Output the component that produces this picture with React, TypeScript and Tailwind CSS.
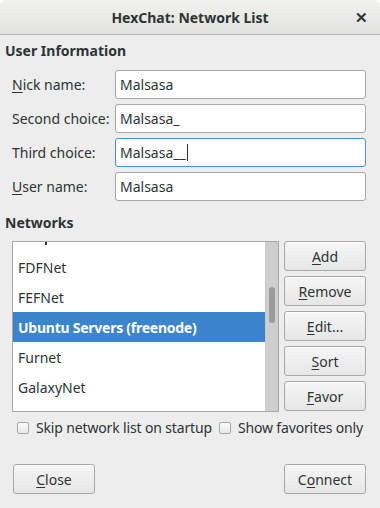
import React from 'react';

const U = ({ children }: { children: React.ReactNode }) => <span className="underline underline-offset-2 decoration-1">{children}</span>;

const fields = [
  { label: <><U>N</U>ick name:</>, value: 'Malsasa' },
  { label: <>Second choice:</>, value: 'Malsasa_' },
  { label: <>Third choice:</>, value: 'Malsasa__', focused: true },
  { label: <><U>U</U>ser name:</>, value: 'Malsasa' },
];

const networks = ['FDFNet', 'FEFNet', 'Ubuntu Servers (freenode)', 'Furnet', 'GalaxyNet'];

const Button = ({ children, className = '' }: { children: React.ReactNode; className?: string }) => (
  <button className={`h-[30px] w-[82px] rounded-[3px] border border-[#a8a8a8] bg-gradient-to-b from-[#f6f6f6] to-[#e6e6e6] text-[14px] text-[#2e3436] shadow-[inset_0_1px_0_#fff] ${className}`}>
    {children}
  </button>
);

const Check = ({ label }: { label: string }) => (
  <label className="flex items-center gap-[7px]">
    <span className="h-[12px] w-[12px] rounded-[2px] border border-[#a8a8a8] bg-gradient-to-b from-[#fbfbfb] to-[#e8e8e8]" />
    <span className="leading-[16px] tracking-[-0.15px]">{label}</span>
  </label>
);

export default function App() {
  return (
    <div className="h-[508px] w-[380px] bg-white" style={{ fontFamily: '"Noto Sans", "Open Sans", sans-serif' }}>
      <div className="flex h-full flex-col rounded-t-[7px] bg-[#ededed] text-[14px] text-[#2e3436]">
        {/* title bar */}
        <div className="relative flex h-[35px] shrink-0 items-center justify-center rounded-t-[7px] border-b border-[#b6b6b3] bg-gradient-to-b from-[#f1f1f0] to-[#e2e2e0]">
          <span className="font-bold text-[14px]">HexChat: Network List</span>
          <span className="absolute right-[12px] top-[6px] text-[15px] font-bold">✕</span>
        </div>

        <div className="flex flex-col px-[5px]">
          <div className="mt-[7px] h-[18px] font-bold leading-[18px]">User Information</div>
          <div className="mt-[10px] flex flex-col gap-[5px] pl-[7px] pr-[9px]">
            {fields.map((f, i) => (
              <div key={i} className="flex h-[29px] items-center">
                <div className="w-[103px]">{f.label}</div>
                <div
                  className={`flex h-[29px] flex-1 items-center rounded-[3px] border bg-white px-[4px] ${
                    f.focused ? 'border-[#4a90d9]' : 'border-[#a8a8a8]'
                  }`}
                >
                  {f.value}
                  {f.focused && <span className="ml-[1px] h-[17px] w-px bg-[#2e3436]" />}
                </div>
              </div>
            ))}
          </div>

          <div className="mt-[13px] h-[18px] font-bold leading-[18px]">Networks</div>

          <div className="mt-[9px] flex gap-[5px] pl-[7px] pr-[9px]">
            <div className="flex h-[171px] flex-1 overflow-hidden border border-[#a8a8a8] bg-white">
              <div className="flex-1 overflow-hidden">
                {/* previous row, scrolled almost out of view: only the descender of "p" shows */}
                <div className="relative h-[10px] overflow-hidden">
                  <span className="absolute left-[32px] top-0 h-[3px] w-[1.5px] bg-[#2e3436]" />
                </div>
                {networks.map((n) => (
                  <div
                    key={n}
                    className={`flex h-[30px] items-center px-[5px] ${
                      n.startsWith('Ubuntu') ? 'bg-[#3c84cc] font-bold tracking-[-0.25px] text-white' : ''
                    }`}
                  >
                    {n}
                  </div>
                ))}
              </div>
              <div className="w-[13px] border-l border-[#c8c8c8] bg-[#cecece] px-[3px] pt-[45px]">
                <div className="h-[36px] rounded-full bg-[#9a9a9a]" />
              </div>
            </div>
            <div className="flex flex-col gap-[5px]">
              <Button><U>A</U>dd</Button>
              <Button><U>R</U>emove</Button>
              <Button><U>E</U>dit...</Button>
              <Button><U>S</U>ort</Button>
              <Button><U>F</U>avor</Button>
            </div>
          </div>

          <div className="mt-[8px] flex items-center gap-[7px] pl-[12px]">
            <Check label="Skip network list on startup" />
            <Check label="Show favorites only" />
          </div>

          <div className="mt-[28px] flex justify-between pl-[8px] pr-[9px]">
            <Button><U>C</U>lose</Button>
            <Button>C<U>o</U>nnect</Button>
          </div>
        </div>
      </div>
    </div>
  );
}
